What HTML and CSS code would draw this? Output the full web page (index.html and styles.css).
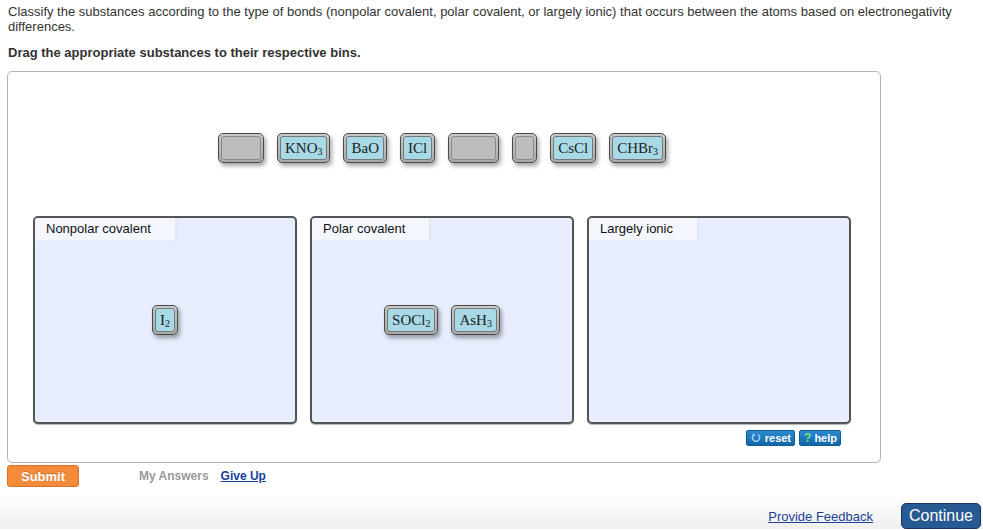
FILE: index.html
```html
<!DOCTYPE html>
<html lang="en">
<head>
    <meta charset="UTF-8">
    <title>Bond Types</title>
    <link rel="stylesheet" href="styles.css">
</head>
<body>
    <div class="problem">
        <p class="prompt">Classify the substances according to the type of bonds (nonpolar covalent, polar covalent, or largely ionic) that occurs between the atoms based on electronegativity differences.</p>
        <p class="instruction">Drag the appropriate substances to their respective bins.</p>

        <div class="dnd-box">
            <div class="tray">
                <div class="tile empty w46"><div class="face"></div></div>
                <div class="tile"><div class="face">KNO<sub>3</sub></div></div>
                <div class="tile"><div class="face">BaO</div></div>
                <div class="tile"><div class="face">ICl</div></div>
                <div class="tile empty w51"><div class="face"></div></div>
                <div class="tile empty w25"><div class="face"></div></div>
                <div class="tile"><div class="face">CsCl</div></div>
                <div class="tile"><div class="face">CHBr<sub>3</sub></div></div>
            </div>

            <div class="bins">
                <div class="bin">
                    <div class="bin-label">Nonpolar covalent</div>
                    <div class="bin-body">
                        <div class="tile"><div class="face">I<sub>2</sub></div></div>
                    </div>
                </div>
                <div class="bin">
                    <div class="bin-label">Polar covalent</div>
                    <div class="bin-body">
                        <div class="tile"><div class="face">SOCl<sub>2</sub></div></div>
                        <div class="tile"><div class="face">AsH<sub>3</sub></div></div>
                    </div>
                </div>
                <div class="bin">
                    <div class="bin-label">Largely ionic</div>
                    <div class="bin-body"></div>
                </div>
            </div>

            <div class="tools">
                <button class="tool-btn">
                    <svg class="reset-icon" width="10" height="10" viewBox="0 0 10 10"><path d="M3 1.6A3.6 3.6 0 1 0 7 1.6" fill="none" stroke="#8fd0ff" stroke-width="1.6"/><path d="M1.2 0.6L4.2 0.9L3.4 3.6Z" fill="#8fd0ff"/></svg>
                    reset
                </button>
                <button class="tool-btn"><span class="q">?</span>help</button>
            </div>
        </div>

        <div class="actions">
            <button class="submit">Submit</button>
            <span class="my-answers">My Answers</span>
            <a href="#" class="give-up">Give Up</a>
        </div>
    </div>

    <div class="footer">
        <a href="#" class="feedback">Provide Feedback</a>
        <button class="continue">Continue</button>
    </div>
</body>
</html>
```

FILE: styles.css
```css
body {
    margin: 0;
    font-family: "Liberation Sans", Arial, sans-serif;
    color: #333;
    background: #fff;
}

.problem {
    padding: 4px 0 0 7px;
}

.prompt {
    margin: 0 30px 0 1px;
    font-size: 13px;
    line-height: 15px;
}

.instruction {
    margin: 11px 0 0 1px;
    font-size: 13px;
    line-height: 15px;
    font-weight: bold;
}

.dnd-box {
    width: 818px;
    height: 390px;
    margin-top: 11px;
    border: 1px solid #b3b3b3;
    border-radius: 5px;
    padding: 0 29px 0 25px;
    display: flex;
    flex-direction: column;
}

.tray {
    display: flex;
    justify-content: center;
    gap: 13px;
    margin-top: 61px;
    height: 30px;
}

.tile {
    display: inline-flex;
    border: 1px solid #4a4a4a;
    border-radius: 5px;
    padding: 2px;
    background: linear-gradient(#c9c9c9, #a9a9a9);
    box-shadow: 2px 3px 4px rgba(0, 0, 0, 0.35);
    box-sizing: border-box;
    height: 30px;
}

.face {
    flex: 1;
    border: 1px solid #777;
    border-radius: 3px;
    background: #a7d9e6;
    padding: 0 4px;
    font-family: "Liberation Serif", "DejaVu Serif", serif;
    font-size: 15px;
    line-height: 22px;
    color: #222;
    white-space: nowrap;
}

.face sub {
    font-size: 10px;
    line-height: 0;
    vertical-align: -2px;
}

.tile.empty .face {
    background: #bdbdbd;
    border-color: #8a8a8a;
}

.w46 { width: 46px; }
.w51 { width: 51px; }
.w25 { width: 25px; }

.bins {
    display: flex;
    gap: 13px;
    margin-top: 53px;
}

.bin {
    width: 264px;
    height: 208px;
    box-sizing: border-box;
    border: 2px solid #555;
    border-radius: 5px;
    background: #e6edfc;
    display: flex;
    flex-direction: column;
    box-shadow: 0 1px 1px rgba(0, 0, 0, 0.3);
}

.bin-label {
    align-self: flex-start;
    height: 23px;
    box-sizing: border-box;
    padding: 3px 24px 0 11px;
    background: #f4f6fd;
    border-right: 2px solid #e2e6f0;
    border-bottom: 1px solid #eef1fa;
    border-top-left-radius: 3px;
    font-size: 13px;
    color: #111;
}

.bin-body {
    flex: 1;
    display: flex;
    align-items: center;
    justify-content: center;
    gap: 13px;
    padding-bottom: 23px;
}

.tools {
    display: flex;
    justify-content: flex-end;
    gap: 4px;
    margin-top: 6px;
    padding-right: 10px;
}

.tool-btn {
    display: flex;
    align-items: center;
    gap: 2px;
    height: 16px;
    padding: 0 3px 0 4px;
    border: 1px solid #0d5e96;
    border-radius: 2px;
    background: linear-gradient(#2a8ad0, #1466a6);
    color: #fff;
    font-family: "Liberation Sans", Arial, sans-serif;
    font-size: 11px;
    font-weight: bold;
}

.reset-icon {
    margin-right: 2px;
}

.tool-btn .q {
    color: #7fe07f;
    font-size: 12px;
    margin-right: 1px;
}

.actions {
    display: flex;
    align-items: center;
    margin-top: 2px;
    height: 22px;
}

.submit {
    width: 72px;
    height: 22px;
    border: 1px solid #d8712a;
    border-radius: 3px;
    background: #f38b3a;
    color: #fff;
    font-family: "Liberation Sans", Arial, sans-serif;
    font-size: 13px;
    font-weight: bold;
    text-shadow: 0 -1px 0 rgba(0, 0, 0, 0.2);
}

.my-answers {
    margin-left: 60px;
    font-size: 12px;
    font-weight: bold;
    color: #999;
}

.give-up {
    margin-left: 12px;
    font-size: 12px;
    font-weight: bold;
    color: #15419a;
}

.footer {
    display: flex;
    justify-content: flex-end;
    align-items: center;
    margin-top: 7px;
    height: 35px;
    padding-right: 2px;
    background: linear-gradient(#fff, #efefef);
}

.feedback {
    font-size: 13px;
    color: #1d3f96;
    margin-right: 28px;
    margin-top: 9px;
}

.continue {
    width: 80px;
    height: 26px;
    margin-top: 8px;
    border: 1px solid #15365e;
    border-radius: 5px;
    background: #275a92;
    color: #fff;
    font-family: "Liberation Sans", Arial, sans-serif;
    font-size: 16px;
}
```
